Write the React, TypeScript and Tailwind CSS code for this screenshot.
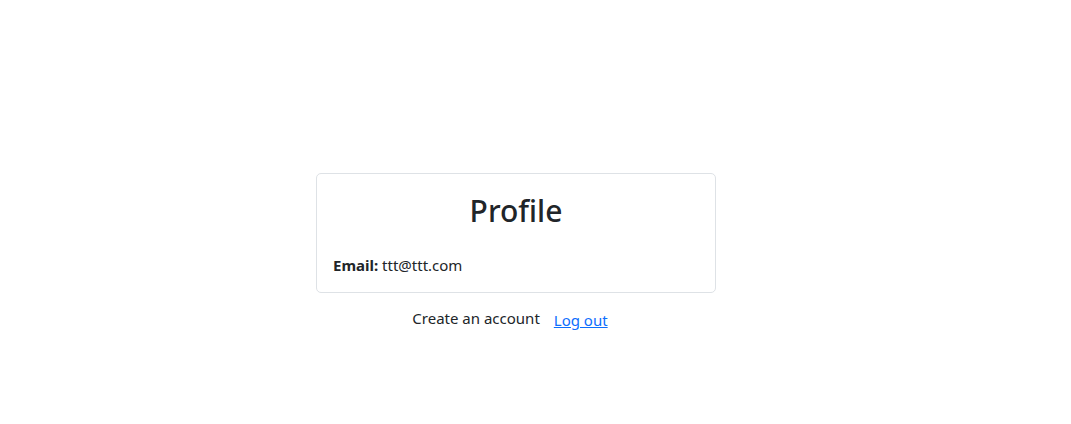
import React from 'react';

const App: React.FC = () => {
  return (
    <div className="min-h-[424px] w-full bg-white text-[#212529]" style={{ fontFamily: '"Noto Sans", "Open Sans", sans-serif' }}>
      <div className="ml-[316px] w-[400px] pt-[173px]">
        <div className="rounded-[5px] border border-[#dee2e6] bg-white px-4 pt-[18px] pb-[15px]">
          <h2 className="mb-[23px] text-center text-[30px] leading-[38px] font-medium">Profile</h2>
          <p className="text-[15px] leading-6">
            <span className="font-bold">Email:</span> ttt@ttt.com
          </p>
        </div>
        <div className="mt-[13px] flex items-start justify-center gap-[14px] pr-[12px] text-[15px] leading-6">
          <span>Create an account</span>
          <a href="#" className="mt-[2px] text-[#0d6efd] underline">Log out</a>
        </div>
      </div>
    </div>
  );
};

export default App;
